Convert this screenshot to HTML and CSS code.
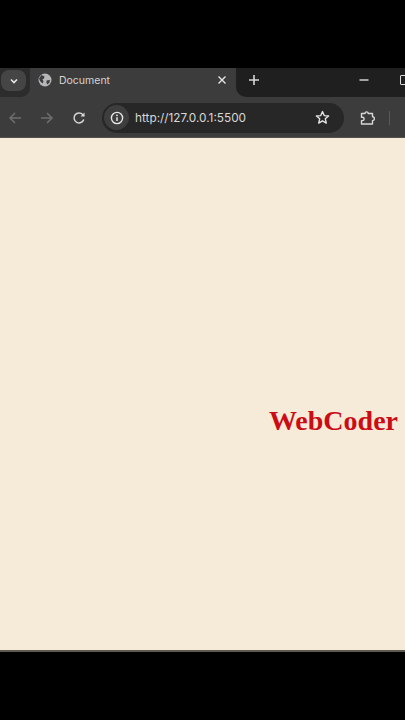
FILE: index.html
```html
<!DOCTYPE html>
<html lang="en">
<head>
<meta charset="utf-8">
<title>Document</title>
<link rel="stylesheet" href="styles.css">
</head>
<body>
<div class="top-black"></div>
<div class="browser">
  <div class="tabstrip">
    <div class="tab-left">
      <div class="tab-search">
        <svg width="10" height="10" viewBox="0 0 10 10"><path d="M2 3.5L5 6.5L8 3.5" fill="none" stroke="#e8e8e8" stroke-width="1.6"/></svg>
      </div>
    </div>
    <div class="tab">
      <svg class="globe" width="14" height="14" viewBox="0 0 14 14"><circle cx="7" cy="7" r="6.5" fill="#b4b6b8"/><path d="M3.5 2L6.5 3.5L6 5.5L4.5 6.2L5.5 8.5L4.5 10.5L2 8L1 5.5Z M8.5 7.5L12 7L11.5 9.5L9.5 11.5L8.5 10Z" fill="#3c3c3c"/></svg>
      <span class="tab-title">Document</span>
      <svg class="tab-close" width="10" height="10" viewBox="0 0 10 10"><path d="M1.5 1.5L8.5 8.5M8.5 1.5L1.5 8.5" stroke="#e4e4e4" stroke-width="1.4"/></svg>
    </div>
    <div class="strip-rest">
      <svg class="new-tab" width="12" height="12" viewBox="0 0 12 12"><path d="M6 1V11M1 6H11" stroke="#d8d8d8" stroke-width="1.6"/></svg>
      <div class="window-controls">
        <svg width="10" height="10" viewBox="0 0 10 10"><path d="M0.5 5H9.5" stroke="#dcdcdc" stroke-width="1.4"/></svg>
        <div class="maximize"></div>
      </div>
    </div>
  </div>
  <div class="toolbar">
    <svg class="nav" width="14" height="14" viewBox="0 0 14 14"><path d="M13 7H2M7 2L2 7L7 12" fill="none" stroke="#6e6e6e" stroke-width="1.5"/></svg>
    <svg class="nav" width="14" height="14" viewBox="0 0 14 14"><path d="M1 7H12M7 2L12 7L7 12" fill="none" stroke="#6e6e6e" stroke-width="1.5"/></svg>
    <svg class="nav" width="14" height="14" viewBox="0 0 14 14"><path d="M11.8 8.5A5 5 0 1 1 10.8 3.6L12 5" fill="none" stroke="#d6d6d6" stroke-width="1.5"/><path d="M12.5 1.5V5.5H8.5Z" fill="#d6d6d6"/></svg>
    <div class="omnibox">
      <div class="site-info">
        <svg width="14" height="14" viewBox="0 0 14 14"><circle cx="7" cy="7" r="5.6" fill="none" stroke="#e6e6e6" stroke-width="1.4"/><path d="M7 6.2V10" stroke="#e6e6e6" stroke-width="1.5"/><circle cx="7" cy="4.3" r="0.9" fill="#e6e6e6"/></svg>
      </div>
      <span class="url">http://127.0.0.1:5500</span>
      <svg class="star" width="15" height="15" viewBox="0 0 15 15"><path d="M7.5 1.6L9.2 5.6L13.6 6L10.3 8.8L11.3 13.1L7.5 10.8L3.7 13.1L4.7 8.8L1.4 6L5.8 5.6Z" fill="none" stroke="#e4e4e4" stroke-width="1.4" stroke-linejoin="round"/></svg>
    </div>
    <svg class="ext" width="16" height="16" viewBox="0 0 16 16"><path d="M2.5 3.5H6A1.6 1.6 0 0 1 9.2 3.5H13.5V6.8A1.6 1.6 0 0 1 13.5 10.6V14H2.5V10.6H3.4A1.7 1.7 0 0 0 3.4 7.2H2.5Z" fill="none" stroke="#d8d8d8" stroke-width="1.4" stroke-linejoin="round"/></svg>
    <div class="divider"></div>
  </div>
</div>
<main class="page">
  <h1 class="brand">WebCoder</h1>
</main>
<div class="page-edge"></div>
<div class="bottom-black"></div>
</body>
</html>
```
FILE: styles.css
```css
* { box-sizing: border-box; }
html, body { margin: 0; padding: 0; height: 720px; overflow: hidden; background: #000; }
body { display: flex; flex-direction: column; font-family: "Liberation Sans", Arial, sans-serif; }
.top-black { height: 68px; background: #000; }
.browser { display: flex; flex-direction: column; height: 70px; }
.tabstrip { height: 29px; background: #3c3c3c; display: flex; align-items: stretch; }
.tab-left { width: 30px; background: #2c2c2c; border-radius: 0 0 9px 0; padding: 2px 0 0 1px; }
.tab-search { width: 25px; height: 21px; background: #454545; border-radius: 8px; display: flex; align-items: center; justify-content: center; }
.tab { width: 206px; background: #3c3c3c; display: flex; align-items: center; padding: 0 9px 5px 8px; }
.globe { flex: none; }
.tab-title { margin-left: 7px; flex: 1; font-family: "Inter", "Liberation Sans", sans-serif; font-size: 10.5px; color: #d4d4d4; }
.tab-close { flex: none; }
.strip-rest { flex: 1; background: #1f1f1f; border-radius: 0 0 0 10px; display: flex; align-items: center; padding: 0 0 5px 12px; }
.new-tab { flex: none; }
.window-controls { margin-left: auto; display: flex; align-items: center; gap: 31px; margin-right: -5px; }
.maximize { width: 10px; height: 10px; border: 1.4px solid #dcdcdc; border-radius: 1px; }
.toolbar { height: 41px; background: #3c3c3c; display: flex; align-items: center; padding: 1px 0 0 8px; gap: 18px; border-bottom: 1px solid #55524c; }
.nav { flex: none; }
.omnibox { width: 242px; height: 30px; margin-left: -2px; background: #272727; border-radius: 15px; display: flex; align-items: center; padding: 0 14px 0 2px; }
.site-info { width: 25px; height: 25px; background: #3e3e3e; border-radius: 50%; display: flex; align-items: center; justify-content: center; flex: none; }
.url { margin-left: 6px; flex: 1; font-family: "Inter", "Liberation Sans", sans-serif; font-size: 11.8px; color: #d8d8d8; }
.star { flex: none; }
.ext { flex: none; margin-left: -3px; }
.divider { width: 1px; height: 14px; background: #5a5a5a; margin-left: -4px; }
.page { height: 512px; background: #f6ebd9; display: flex; justify-content: flex-end; align-items: center; padding: 54px 7px 0 0; }
.brand { margin: 0; font-family: "Liberation Serif", "Times New Roman", serif; font-size: 28px; font-weight: 700; line-height: 32px; color: #cc0c14; }
.page-edge { height: 2px; background: #5e5a52; }
.bottom-black { flex: 1; background: #000; }
```
